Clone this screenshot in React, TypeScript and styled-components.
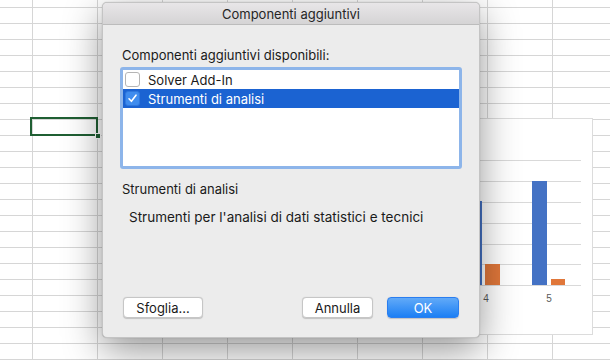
import styled, { createGlobalStyle } from 'styled-components';

const GlobalStyle = createGlobalStyle`
  html, body {
    margin: 0;
    padding: 0;
    width: 610px;
    height: 360px;
    overflow: hidden;
    background: #ffffff;
  }
  * {
    box-sizing: border-box;
  }
`;

const addIns = [
  { id: 1, title: 'Solver Add-In', checked: false },
  { id: 2, title: 'Strumenti di analisi', checked: true },
];

export default function App() {
  return (
    <>
      <GlobalStyle />
      <Sheet>
        <SelectedCell>
          <FillHandle />
        </SelectedCell>
        <ChartPanel>
          <svg width="153" height="217" viewBox="0 0 153 217">
            {[41, 62, 83, 104, 125, 145].map((y) => (
              <line key={y} x1="0" x2="140" y1={y + 0.5} y2={y + 0.5} stroke="#d9d9d9" />
            ))}
            <line x1="0" x2="140" y1="166.5" y2="166.5" stroke="#d9d9d9" />
            <rect x="26" y="82" width="15" height="84" fill="#4472c4" />
            <rect x="44" y="145" width="15" height="21" fill="#e0773a" />
            <rect x="91" y="62" width="15" height="104" fill="#4472c4" />
            <rect x="110" y="160" width="14" height="6" fill="#e0773a" />
            <text x="45" y="183" textAnchor="middle" fontSize="10" fill="#595959" fontFamily="Liberation Sans, sans-serif">
              4
            </text>
            <text x="108" y="183" textAnchor="middle" fontSize="10" fill="#595959" fontFamily="Liberation Sans, sans-serif">
              5
            </text>
          </svg>
        </ChartPanel>
        <Dialog>
          <TitleBar>Componenti aggiuntivi</TitleBar>
          <DialogBody>
            <Label>Componenti aggiuntivi disponibili:</Label>
            <ListBox>
              {addIns.map((item) => (
                <ListRow key={item.id} $selected={item.checked}>
                  <CheckBox $checked={item.checked}>
                    {item.checked && (
                      <svg width="11" height="11" viewBox="0 0 11 11">
                        <path d="M2 5.8 L4.4 8.3 L9 2.2" fill="none" stroke="#fff" strokeWidth="1.6" strokeLinecap="round" strokeLinejoin="round" />
                      </svg>
                    )}
                  </CheckBox>
                  {item.title}
                </ListRow>
              ))}
            </ListBox>
            <SectionTitle>Strumenti di analisi</SectionTitle>
            <Description>Strumenti per l'analisi di dati statistici e tecnici</Description>
            <Footer>
              <Button>Sfoglia...</Button>
              <RightButtons>
                <Button $width={71}>Annulla</Button>
                <Button $width={72} $primary>
                  OK
                </Button>
              </RightButtons>
            </Footer>
          </DialogBody>
        </Dialog>
      </Sheet>
    </>
  );
}

const Sheet = styled.div`
  position: relative;
  width: 610px;
  height: 360px;
  overflow: hidden;
  background-color: #ffffff;
  background-image: linear-gradient(to bottom, #d6d6d6 1px, transparent 1px),
    linear-gradient(to right, #d6d6d6 1px, transparent 1px);
  background-size: 100% 16px, 65px 100%;
  background-position: 0 7px, 32px 0;
`;

const SelectedCell = styled.div`
  position: absolute;
  left: 30px;
  top: 117px;
  width: 68px;
  height: 19px;
  border: 2px solid #1f5f33;
`;

const FillHandle = styled.div`
  position: absolute;
  right: -5px;
  bottom: -5px;
  width: 6px;
  height: 6px;
  background: #1f5f33;
  border: 1px solid #ffffff;
`;

const ChartPanel = styled.div`
  position: absolute;
  left: 440px;
  top: 118px;
  width: 153px;
  height: 217px;
  background: #ffffff;
  border: 1px solid #dcdcdc;
  svg {
    display: block;
  }
`;

const Dialog = styled.div`
  position: absolute;
  left: 102px;
  top: 2px;
  width: 378px;
  height: 336px;
  display: flex;
  flex-direction: column;
  background: #ececec;
  border-radius: 5px;
  border: 1px solid #c4c4c4;
  box-shadow: 0 12px 38px rgba(0, 0, 0, 0.42), 0 0 1px rgba(0, 0, 0, 0.3);
  font-family: Inter, 'Noto Sans', sans-serif;
  font-size: 13px;
  color: #1a1a1a;
  overflow: hidden;
`;

const TitleBar = styled.div`
  height: 22px;
  flex-shrink: 0;
  display: flex;
  align-items: center;
  justify-content: center;
  background: linear-gradient(to bottom, #e8e6e8, #d5d4d5);
  border-bottom: 1px solid #bcbcbc;
  color: #262626;
  font-size: 13px;
`;

const DialogBody = styled.div`
  flex: 1;
  display: flex;
  flex-direction: column;
  padding: 22px 20px 19px 17px;
`;

const Label = styled.div`
  line-height: 16px;
  padding-left: 2px;
`;

const ListBox = styled.div`
  margin-top: 4px;
  width: 342px;
  height: 102px;
  background: #ffffff;
  border: 3px solid #8db5ea;
  border-radius: 3px;
  padding-top: 0;
`;

const ListRow = styled.div<{ $selected?: boolean }>`
  height: 19px;
  display: flex;
  align-items: center;
  gap: 8px;
  padding-left: 2px;
  background: ${(p) => (p.$selected ? '#1b63d2' : 'transparent')};
  color: ${(p) => (p.$selected ? '#ffffff' : '#1a1a1a')};
`;

const CheckBox = styled.span<{ $checked?: boolean }>`
  width: 15px;
  height: 15px;
  border-radius: 3px;
  display: flex;
  align-items: center;
  justify-content: center;
  background: ${(p) => (p.$checked ? '#3f8cee' : '#ffffff')};
  border: 1px solid ${(p) => (p.$checked ? '#2f78de' : '#b5b5b5')};
`;

const SectionTitle = styled.div`
  margin-top: 12px;
  line-height: 16px;
  padding-left: 2px;
`;

const Description = styled.div`
  margin-top: 12px;
  line-height: 16px;
  padding-left: 9px;
  font-size: 13.5px;
`;

const Footer = styled.div`
  margin-top: auto;
  display: flex;
  justify-content: space-between;
  padding-left: 3px;
`;

const RightButtons = styled.div`
  display: flex;
  gap: 14px;
`;

const Button = styled.button<{ $width?: number; $primary?: boolean }>`
  width: ${(p) => p.$width ?? 80}px;
  height: 21px;
  padding: 0;
  border-radius: 4px;
  font-family: Inter, 'Noto Sans', sans-serif;
  font-size: 13px;
  border: 1px solid ${(p) => (p.$primary ? '#2a7ef0' : '#c6c6c6')};
  background: ${(p) => (p.$primary ? 'linear-gradient(to bottom, #62aaf8, #1c7ff4)' : '#ffffff')};
  color: ${(p) => (p.$primary ? '#ffffff' : '#1a1a1a')};
  box-shadow: 0 0.5px 1px rgba(0, 0, 0, 0.18);
`;
